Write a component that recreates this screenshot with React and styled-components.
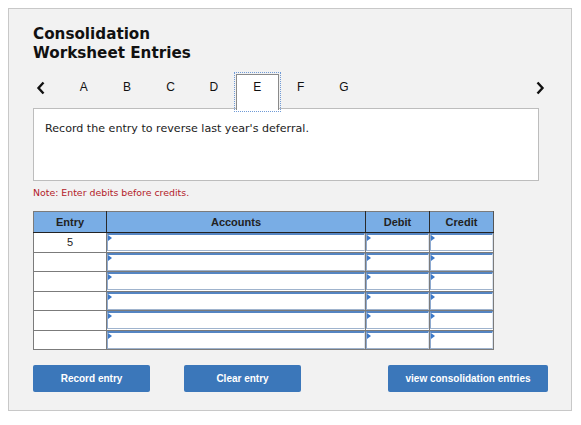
import React from "react";
import styled, { createGlobalStyle } from "styled-components";

const Global = createGlobalStyle`
  html, body { margin: 0; padding: 0; background: #ffffff; }
  body { font-family: "DejaVu Sans", Verdana, sans-serif; }
  * { box-sizing: border-box; }
`;

const Panel = styled.div`
  margin: 8px;
  width: 564px;
  height: 403px;
  border: 1px solid #c8c8c8;
  background: #f2f2f2;
  padding: 16px 23px 0 24px;
  display: flex;
  flex-direction: column;
`;

const Title = styled.h1`
  margin: 0;
  font-family: "DejaVu Sans", Verdana, sans-serif;
  font-weight: bold;
  font-size: 15.2px;
  line-height: 19px;
  color: #111;
`;

const Nav = styled.div`
  margin-top: 11px;
  display: flex;
  align-items: flex-start;
  height: 35px;
  width: 506px;
  position: relative;
  z-index: 1;
  margin-bottom: -1px;
`;

const Arrow = styled.button`
  border: 0;
  background: transparent;
  padding: 0;
  width: ${(p) => p.$w}px;
  height: 35px;
  display: flex;
  justify-content: ${(p) => (p.$right ? "flex-end" : "flex-start")};
  align-items: flex-start;
  padding-top: 7px;
  padding-left: ${(p) => (p.$right ? 0 : 3)}px;
  cursor: pointer;
`;

const Tabs = styled.div`
  display: flex;
  flex: 1;
`;

const Tab = styled.div`
  width: 43.4px;
  display: flex;
  justify-content: center;
  padding-top: 5px;
  font-family: "Liberation Sans", Arial, sans-serif;
  font-size: 12px;
  line-height: 14px;
  color: #111;
  background: ${(p) => (p.$active ? "#fff" : "transparent")};
  border: 1px solid ${(p) => (p.$active ? "#8a8a8a" : "transparent")};
  border-bottom: 0;
  outline: ${(p) => (p.$active ? "1px dotted #6f9ad6" : "none")};
  outline-offset: 1px;
  height: ${(p) => (p.$active ? "36px" : "35px")};
`;

const NextWrap = styled.div`
  position: absolute;
  right: -6px;
  top: 0;
`;

const Prompt = styled.div`
  width: 506px;
  height: 73px;
  background: #fff;
  border: 1px solid #bdbdbd;
  padding: 13px 11px;
  font-size: 11.1px;
  line-height: 14px;
  color: #222;
`;

const Note = styled.div`
  margin-top: 6px;
  font-size: 9.4px;
  line-height: 12px;
  color: #b3212a;
`;

const Table = styled.table`
  margin-top: 12px;
  border-collapse: collapse;
  width: 460px;
  table-layout: fixed;
  font-family: "Liberation Sans", Arial, sans-serif;
`;

const Th = styled.th`
  background: #79ade5;
  height: 21px;
  padding: 0;
  font-size: 11px;
  font-weight: bold;
  color: #222;
  border: 1px solid #7b7b7b;
  border-left-color: ${(p) => (p.$first ? "#7b7b7b" : "#2a2a2a")};
  border-right-color: ${(p) => (p.$last ? "#555" : "#2a2a2a")};
  border-bottom-color: #222;
`;

const Td = styled.td`
  height: 19.5px;
  padding: 0;
  background: #fff;
  border: 1px solid #7b7b7b;
  text-align: center;
  font-size: 11px;
  color: #222;
  vertical-align: top;
`;

const EntryText = styled.div`
  padding-top: 3px;
  line-height: 12px;
`;

const Field = styled.div`
  position: relative;
  height: 18px;
  background: #fff;
  border-top: 2px solid #5585c2;
  border-left: 1px solid #8eaad0;
  border-right: 1px solid #dbe3ee;
  border-bottom: 1px solid #9fb3cd;
  &::before {
    content: "";
    position: absolute;
    left: 0;
    top: 0;
    width: 0;
    height: 0;
    border-left: 4px solid #3b78c8;
    border-top: 3px solid transparent;
    border-bottom: 3px solid transparent;
  }
`;

const Buttons = styled.div`
  margin-top: 15px;
  display: flex;
  align-items: center;
`;

const Btn = styled.button`
  width: ${(p) => p.$w}px;
  height: 27px;
  margin-left: ${(p) => p.$ml || 0}px;
  border: 0;
  border-radius: 2px;
  background: #3b77ba;
  color: #fff;
  font-family: "Liberation Sans", Arial, sans-serif;
  font-weight: bold;
  font-size: 10px;
  cursor: pointer;
`;

const Chevron = ({ dir }) => (
  <svg width="10" height="14" viewBox="0 0 10 14">
    <polyline
      points={dir === "left" ? "7.5,1.5 2.5,7 7.5,12.5" : "2.5,1.5 7.5,7 2.5,12.5"}
      fill="none"
      stroke="#111"
      strokeWidth="2.4"
    />
  </svg>
);

const letters = ["A", "B", "C", "D", "E", "F", "G"];

export default function App() {
  const rows = [1, 2, 3, 4, 5, 6];
  return (
    <>
      <Global />
      <Panel>
        <Title>
          Consolidation
          <br />
          Worksheet Entries
        </Title>
        <Nav>
          <Arrow $w={29}>
            <Chevron dir="left" />
          </Arrow>
          <Tabs>
            {letters.map((l) => (
              <Tab key={l} $active={l === "E"}>
                {l}
              </Tab>
            ))}
          </Tabs>
          <NextWrap>
            <Arrow $w={20} $right>
              <Chevron dir="right" />
            </Arrow>
          </NextWrap>
        </Nav>
        <Prompt>Record the entry to reverse last year's deferral.</Prompt>
        <Note>Note: Enter debits before credits.</Note>
        <Table>
          <colgroup>
            <col style={{ width: 73 }} />
            <col style={{ width: 259 }} />
            <col style={{ width: 64 }} />
            <col style={{ width: 64 }} />
          </colgroup>
          <thead>
            <tr>
              <Th $first>Entry</Th>
              <Th>Accounts</Th>
              <Th>Debit</Th>
              <Th $last>Credit</Th>
            </tr>
          </thead>
          <tbody>
            {rows.map((r) => (
              <tr key={r}>
                <Td>
                  <EntryText>{r === 1 ? "5" : ""}</EntryText>
                </Td>
                <Td>
                  <Field />
                </Td>
                <Td>
                  <Field />
                </Td>
                <Td>
                  <Field />
                </Td>
              </tr>
            ))}
          </tbody>
        </Table>
        <Buttons>
          <Btn $w={117}>Record entry</Btn>
          <Btn $w={117} $ml={34}>Clear entry</Btn>
          <Btn $w={160} $ml={87}>view consolidation entries</Btn>
        </Buttons>
      </Panel>
    </>
  );
}
